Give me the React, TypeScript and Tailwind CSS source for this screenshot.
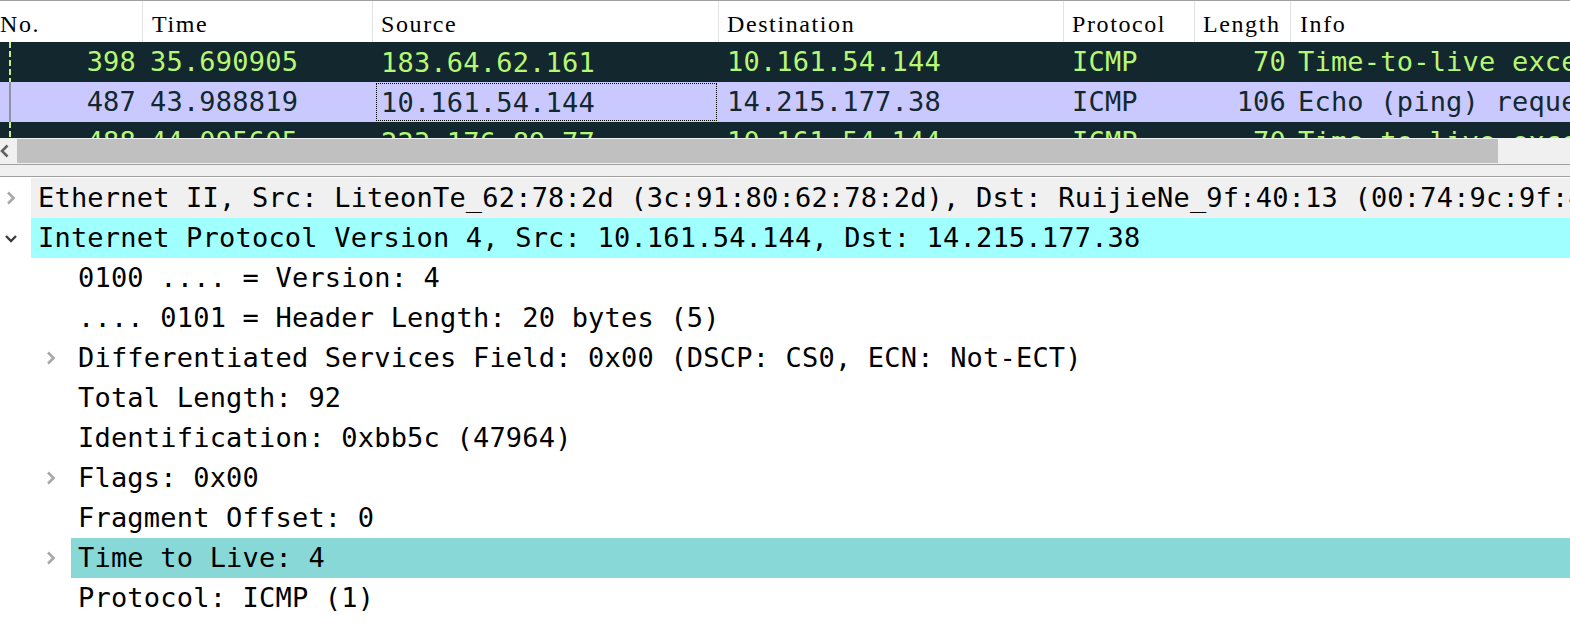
import React from 'react';

const mono = "font-['DejaVu_Sans_Mono',monospace] text-[27px] leading-[40px] tracking-[0.2px] whitespace-nowrap";
const headFont = "font-['Liberation_Serif',serif] text-[24px] tracking-[1.6px] whitespace-nowrap";

const columns = [
  { label: 'No.', w: 'w-[143px]', pad: 'pl-0' },
  { label: 'Time', w: 'w-[230px]', pad: 'pl-[9px]' },
  { label: 'Source', w: 'w-[346px]', pad: 'pl-[8px]' },
  { label: 'Destination', w: 'w-[345px]', pad: 'pl-[8px]' },
  { label: 'Protocol', w: 'w-[131px]', pad: 'pl-[8px]' },
  { label: 'Length', w: 'w-[96px]', pad: 'pl-[8px]' },
  { label: 'Info', w: 'flex-1', pad: 'pl-[9px]' },
];

type Packet = {
  no: string;
  time: string;
  src: string;
  dst: string;
  proto: string;
  len: string;
  info: string;
  dark: boolean;
  focus?: boolean;
};

const packets: Packet[] = [
  { no: '398', time: '35.690905', src: '183.64.62.161', dst: '10.161.54.144', proto: 'ICMP', len: '70', info: 'Time-to-live exceeded (Time to live exceeded in transit)', dark: true },
  { no: '487', time: '43.988819', src: '10.161.54.144', dst: '14.215.177.38', proto: 'ICMP', len: '106', info: 'Echo (ping) request  id=0x0001, seq=1/256, ttl=4', dark: false, focus: true },
  { no: '488', time: '44.095605', src: '223.176.89.77', dst: '10.161.54.144', proto: 'ICMP', len: '70', info: 'Time-to-live exceeded (Time to live exceeded in transit)', dark: true },
];

const Chevron = ({ open }: { open?: boolean }) =>
  open ? (
    <svg width="14" height="9" viewBox="0 0 14 9">
      <polyline points="2,2 7,7 12,2" fill="none" stroke="#3c3c3c" strokeWidth="2.4" />
    </svg>
  ) : (
    <svg width="10" height="14" viewBox="0 0 10 14">
      <polyline points="2,1.5 7.5,7 2,12.5" fill="none" stroke="#a8a8a8" strokeWidth="2.6" />
    </svg>
  );

const PacketRow = ({ p }: { p: Packet }) => {
  const bg = p.dark ? 'bg-[#12272e] text-[#b7f774]' : 'bg-[#c9c9ff] text-[#12272e]';
  const stripe = p.dark
    ? 'bg-[repeating-linear-gradient(to_bottom,#c4f08c_0px,#c4f08c_6px,transparent_6px,transparent_9px)]'
    : 'bg-[#8a92a8]';
  return (
    <div className={`flex h-[40px] shrink-0 ${bg} ${mono}`}>
      <div className="w-[143px] flex items-stretch">
        <div className={`ml-[9px] w-[2px] ${stripe}`} />
        <div className="flex-1 text-right pr-[7px]">{p.no}</div>
      </div>
      <div className="w-[230px] pl-[7px]">{p.time}</div>
      <div className="w-[346px] flex py-[1px] pl-[3px] pr-[2px]">
        <div className={`flex-1 pl-[4px] leading-[38px] border border-dotted ${p.focus ? 'border-black' : 'border-transparent'}`}>
          {p.src}
        </div>
      </div>
      <div className="w-[345px] pl-[8px]">{p.dst}</div>
      <div className="w-[131px] pl-[8px]">{p.proto}</div>
      <div className="w-[96px] text-right pr-[5px]">{p.len}</div>
      <div className="flex-1 pl-[7px] overflow-hidden">{p.info}</div>
    </div>
  );
};

type Node = { text: string; level: 0 | 1; arrow?: 'open' | 'closed'; bg?: string };

const tree: Node[] = [
  { text: 'Ethernet II, Src: LiteonTe_62:78:2d (3c:91:80:62:78:2d), Dst: RuijieNe_9f:40:13 (00:74:9c:9f:40:13)', level: 0, arrow: 'closed', bg: 'bg-[#f0f0f0]' },
  { text: 'Internet Protocol Version 4, Src: 10.161.54.144, Dst: 14.215.177.38', level: 0, arrow: 'open', bg: 'bg-[#a0ffff]' },
  { text: '0100 .... = Version: 4', level: 1 },
  { text: '.... 0101 = Header Length: 20 bytes (5)', level: 1 },
  { text: 'Differentiated Services Field: 0x00 (DSCP: CS0, ECN: Not-ECT)', level: 1, arrow: 'closed' },
  { text: 'Total Length: 92', level: 1 },
  { text: 'Identification: 0xbb5c (47964)', level: 1 },
  { text: 'Flags: 0x00', level: 1, arrow: 'closed' },
  { text: 'Fragment Offset: 0', level: 1 },
  { text: 'Time to Live: 4', level: 1, arrow: 'closed', bg: 'bg-[#88d8d8]' },
  { text: 'Protocol: ICMP (1)', level: 1 },
];

const TreeRow = ({ n }: { n: Node }) => (
  <div className={`flex h-[40px] shrink-0 items-center ${n.level === 0 ? 'pl-0' : 'pl-[40px]'}`}>
    <div className={`w-[31px] flex items-center ${n.arrow === 'open' ? 'pl-[4px]' : 'pl-[6px]'}`}>
      {n.arrow === 'open' && <Chevron open />}
      {n.arrow === 'closed' && <Chevron />}
    </div>
    <div className={`flex-1 h-full pl-[7px] text-black overflow-hidden ${mono} ${n.bg ?? ''}`}>{n.text}</div>
  </div>
);

export default function App() {
  return (
    <div className="w-[1570px] h-[627px] overflow-hidden bg-white flex flex-col">
      {/* packet list header */}
      <div className="border-t border-[#a0a0a0] h-[42px] shrink-0 flex bg-white text-black">
        {columns.map((c, i) => (
          <div
            key={c.label}
            className={`${c.w} ${c.pad} h-full flex items-center pt-[4px] ${i < columns.length - 1 ? 'border-r border-[#e3e3e3]' : ''} ${headFont}`}
          >
            {c.label}
          </div>
        ))}
      </div>

      {/* packet rows */}
      <div className="h-[96px] shrink-0 overflow-hidden flex flex-col">
        {packets.map((p) => (
          <PacketRow key={p.no} p={p} />
        ))}
      </div>

      {/* horizontal scrollbar */}
      <div className="h-[26px] shrink-0 bg-[#f0f0f0] flex items-stretch py-[1px]">
        <div className="w-[17px] flex items-center">
          <svg width="9" height="14" viewBox="0 0 9 14">
            <polyline points="7.5,1.5 2,7 7.5,12.5" fill="none" stroke="#606060" strokeWidth="2.5" />
          </svg>
        </div>
        <div className="w-[1481px] bg-[#c0c0c0]" />
      </div>

      {/* splitter */}
      <div className="h-[13px] shrink-0 border-y border-[#a0a0a0] bg-[#f0f0f0]" />

      {/* packet details */}
      <div className="flex-1 flex flex-col pt-[1px] overflow-hidden">
        {tree.map((n, i) => (
          <TreeRow key={i} n={n} />
        ))}
      </div>
    </div>
  );
}
